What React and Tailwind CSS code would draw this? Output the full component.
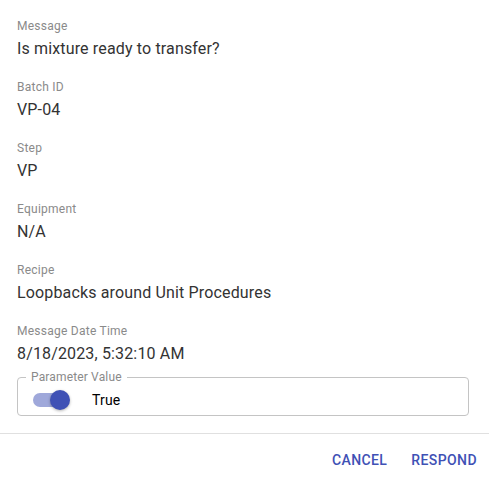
import React, { useState } from "react";

const fields = [
  { label: "Message", value: "Is mixture ready to transfer?" },
  { label: "Batch ID", value: "VP-04" },
  { label: "Step", value: "VP" },
  { label: "Equipment", value: "N/A" },
  { label: "Recipe", value: "Loopbacks around Unit Procedures" },
  { label: "Message Date Time", value: "8/18/2023, 5:32:10 AM" },
];

const App = () => {
  const [checked, setChecked] = useState(true);

  return (
    <div className="min-h-screen bg-white font-['Roboto',sans-serif]">
      <div className="px-[17px] pt-[16px]">
        {fields.map((f, i) => (
          <div key={f.label} className={i < fields.length - 1 ? "mb-[16px]" : ""}>
            <div className="text-xs leading-5 tracking-[0.25px] text-[#8a8a8a]">{f.label}</div>
            <div className="mt-[1px] text-base leading-6 tracking-[0.15px] text-[#333333]">{f.value}</div>
          </div>
        ))}

        {/* outlined parameter box */}
        <div className="relative mt-[11px] mr-[3px] h-[39px] border border-[#c4c4c4] rounded flex items-center pl-[15px] pt-[6px]">
          <span className="absolute top-[-9px] left-[8px] px-[5px] bg-white text-xs leading-4 tracking-[0.15px] text-[#8a8a8a]">
            Parameter Value
          </span>
          <button
            onClick={() => setChecked(!checked)}
            className={`relative w-[34px] h-[14px] rounded-full ${checked ? "bg-[#9fa8da]" : "bg-[#bdbdbd]"}`}
          >
            <span
              className={`absolute top-[-3px] w-5 h-5 rounded-full shadow-[0_1px_3px_rgba(0,0,0,0.3)] ${checked ? "left-[17px] bg-[#3f51b5]" : "left-[-3px] bg-[#fafafa]"}`}
            />
          </button>
          <span className="ml-[25px] text-sm tracking-[0.15px] text-black">{checked ? "True" : "False"}</span>
        </div>
      </div>

      <div className="mt-[17px] border-t border-[#e0e0e0] flex justify-end items-center gap-[8px] pr-[4px] pt-[8px]">
        <button className="h-9 px-2 text-sm font-medium tracking-[0.4px] uppercase text-[#3f51b5]">Cancel</button>
        <button className="h-9 px-2 text-sm font-medium tracking-[0.4px] uppercase text-[#3f51b5]">Respond</button>
      </div>
    </div>
  );
};

export default App;
